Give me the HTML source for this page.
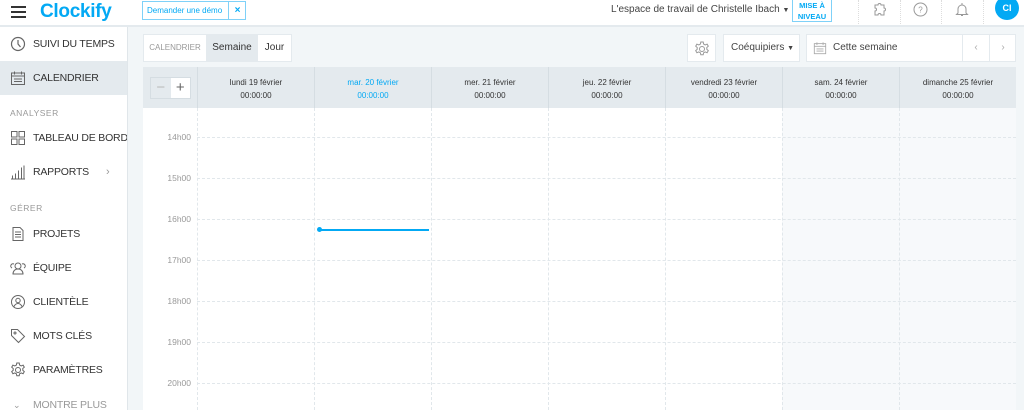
<!DOCTYPE html>
<html><head><meta charset="utf-8"><style>
*{box-sizing:border-box;margin:0;padding:0}
html{width:1024px;height:410px;overflow:hidden}
body{width:1024px;height:410px;overflow:hidden;background:#f2f6f8;font-family:"Liberation Sans",sans-serif;position:relative;color:#333}
.a{position:absolute}
#top{left:0;top:0;width:1024px;height:27px;background:#fff;border-bottom:2px solid #e4eaee;overflow:hidden}
#side{left:0;top:27px;width:128px;height:383px;background:#fff;border-right:1px solid #e0e6ea;overflow:hidden}
.it{position:absolute;left:0;width:127px;height:34px;font-size:10.5px;letter-spacing:-.2px;white-space:nowrap;color:#333;display:flex;align-items:center;padding-left:33px}
.sec{position:absolute;left:10px;font-size:8.5px;color:#999;letter-spacing:.5px}
.ic{position:absolute;left:10px;width:16px;height:16px}
.box{background:#fff;border:1px solid #e4eaee}
.dh{position:absolute;top:0;height:41px;width:117px;border-left:1px solid #d5dde2;text-align:center;font-size:8px;color:#333;padding-top:9px;line-height:13px}
.vl{position:absolute;top:41px;height:302px;border-left:1px dashed #e1e7eb}
.hl{position:absolute;left:54px;width:819px;border-top:1px dashed #e1e7eb}
.tl{position:absolute;left:0;width:48px;text-align:right;font-size:8.5px;color:#999}
</style></head><body>
<div id="top" class="a">
  <div class="a" style="left:11px;top:6px;width:15px;height:2px;background:#333;box-shadow:0 5px 0 #333,0 10px 0 #333"></div>
  <div class="a" style="left:40px;top:1px;font-size:19px;font-weight:bold;color:#03a9f4;letter-spacing:-.3px">Clockify</div>
  <div class="a" style="left:142px;top:1px;height:19px;width:104px;border:1px solid #7fd1f8;font-size:8px;color:#03a9f4;line-height:17px">
    <span style="padding-left:4px">Demander une démo</span>
    <span class="a" style="left:85px;top:0;width:18px;height:17px;border-left:1px solid #7fd1f8;text-align:center;font-weight:bold;font-size:10px">×</span></div>
  <div class="a" style="left:611px;top:4px;font-size:10px;color:#444">L'espace de travail de Christelle Ibach <span style="font-size:7px">▼</span></div>
  <div class="a" style="left:792px;top:-3px;width:40px;height:25px;border:1px solid #7fd1f8;font-size:7.5px;color:#03a9f4;text-align:center;line-height:11px;padding-top:2px;font-weight:bold">MISE À<br>NIVEAU</div>
  <div class="a" style="left:858px;top:0;height:26px;border-left:1px dotted #ddd"></div>
  <div class="a" style="left:900px;top:0;height:26px;border-left:1px dotted #ddd"></div>
  <div class="a" style="left:941px;top:0;height:26px;border-left:1px dotted #ddd"></div>
  <div class="a" style="left:983px;top:0;height:26px;border-left:1px dotted #ddd"></div>
  <svg class="a" style="left:872px;top:3px" width="14" height="14" viewBox="0 0 14 14" fill="none" stroke="#999" stroke-width="1"><path d="M3 2h3a1.5 1.5 0 013 0h3v3a1.5 1.5 0 010 3v4H9a1.5 1.5 0 00-3 0H3V8a1.5 1.5 0 000-3z"/></svg>
  <svg class="a" style="left:913px;top:2px" width="15" height="15" viewBox="0 0 15 15" fill="none" stroke="#999"><circle cx="7.5" cy="7.5" r="6.5"/><text x="7.5" y="10.5" font-size="8" text-anchor="middle" fill="#999" stroke="none" font-family="Liberation Sans">?</text></svg>
  <svg class="a" style="left:955px;top:2px" width="14" height="15" viewBox="0 0 14 15" fill="none" stroke="#999"><path d="M3 11V7a4 4 0 018 0v4l1.5 1.5h-11zM6 13.5h2M7 1v2"/></svg>
  <div class="a" style="left:995px;top:-4px;width:24px;height:24px;border-radius:50%;background:#03a9f4;color:#fff;font-size:9px;font-weight:bold;text-align:center;line-height:24px">CI</div>
</div>
<div id="side" class="a">
  <div class="it" style="top:0"><svg class="ic" viewBox="0 0 16 16" fill="none" stroke="#666" stroke-width="1.2"><circle cx="8" cy="8" r="6.5"/><path d="M8 4v4l2.5 3"/></svg>SUIVI DU TEMPS</div>
  <div class="it" style="top:34px;background:#e4eaee"><svg class="ic" viewBox="0 0 16 16" fill="none" stroke="#666"><rect x="1.5" y="3" width="13" height="11.5"/><path d="M1.5 6h13M4.5 1.5v3M11.5 1.5v3M4 9h8M4 11.5h8"/></svg>CALENDRIER</div>
  <div class="sec" style="top:81px">ANALYSER</div>
  <div class="it" style="top:94px"><svg class="ic" viewBox="0 0 16 16" fill="none" stroke="#666"><rect x="1.5" y="1.5" width="5.5" height="5.5"/><rect x="9" y="1.5" width="5.5" height="5.5"/><rect x="1.5" y="9" width="5.5" height="5.5"/><rect x="9" y="9" width="5.5" height="5.5"/></svg>TABLEAU DE BORD</div>
  <div class="it" style="top:128px"><svg class="ic" viewBox="0 0 16 16" fill="none" stroke="#666"><path d="M1 15h14M2.5 14.5v-3M5.5 14.5v-5M8.5 14.5v-8M11.5 14.5v-11M14 14.5v-13"/></svg>RAPPORTS<span class="a" style="left:106px;color:#999;font-size:11px">›</span></div>
  <div class="sec" style="top:176px">GÉRER</div>
  <div class="it" style="top:190px"><svg class="ic" viewBox="0 0 16 16" fill="none" stroke="#666"><path d="M3 1.5h7l3 3v10H3zM5 6h6M5 8.5h6M5 11h6"/></svg>PROJETS</div>
  <div class="it" style="top:224px"><svg class="ic" viewBox="0 0 16 16" fill="none" stroke="#666"><circle cx="8" cy="6" r="3"/><path d="M3 14c0-3 2-5 5-5s5 2 5 5zM4 4a2 2 0 00-2 4M12 4a2 2 0 012 4"/></svg>ÉQUIPE</div>
  <div class="it" style="top:258px"><svg class="ic" viewBox="0 0 16 16" fill="none" stroke="#666"><circle cx="8" cy="8" r="6.5"/><circle cx="8" cy="6.5" r="2.2"/><path d="M4 12.5c1-2 2.5-3 4-3s3 1 4 3"/></svg>CLIENTÈLE</div>
  <div class="it" style="top:292px"><svg class="ic" viewBox="0 0 16 16" fill="none" stroke="#666"><path d="M1.5 1.5h6l7 7-6 6-7-7z"/><circle cx="5" cy="5" r="1"/></svg>MOTS CLÉS</div>
  <div class="it" style="top:326px"><svg class="ic" viewBox="0 0 16 16" fill="none" stroke="#666"><circle cx="8" cy="8" r="2.5"/><path d="M6.8 1h2.4l.4 2 1.6.9 1.9-.8 1.2 2.1-1.5 1.3v1.8l1.5 1.3-1.2 2.1-1.9-.8-1.6.9-.4 2H6.8l-.4-2-1.6-.9-1.9.8L1.7 9.6l1.5-1.3V6.5L1.7 5.2l1.2-2.1 1.9.8 1.6-.9z"/></svg>PARAMÈTRES</div>
  <div class="it" style="top:361px;color:#999"><span class="a" style="left:13px;font-size:9px;color:#999">⌄</span>MONTRE PLUS</div>
</div>
<div class="a box" style="left:143px;top:34px;width:149px;height:28px;font-size:10px;display:flex">
  <div style="width:62px;text-align:center;line-height:26px;font-size:8px;color:#999">CALENDRIER</div>
  <div style="width:52px;text-align:center;line-height:26px;background:#e4eaee;color:#333">Semaine</div>
  <div style="width:33px;text-align:center;line-height:26px;color:#333">Jour</div>
</div>
<div class="a box" style="left:687px;top:34px;width:29px;height:28px"><svg class="a" style="left:6px;top:6px" width="16" height="16" viewBox="0 0 16 16" fill="none" stroke="#999"><circle cx="8" cy="8" r="2.5"/><path d="M6.8 1h2.4l.4 2 1.6.9 1.9-.8 1.2 2.1-1.5 1.3v1.8l1.5 1.3-1.2 2.1-1.9-.8-1.6.9-.4 2H6.8l-.4-2-1.6-.9-1.9.8L1.7 9.6l1.5-1.3V6.5L1.7 5.2l1.2-2.1 1.9.8 1.6-.9z"/></svg></div>
<div class="a box" style="left:723px;top:34px;width:77px;height:28px;font-size:10px;line-height:26px;padding-left:7px;color:#444">Coéquipiers <span style="font-size:7px">▼</span></div>
<div class="a box" style="left:806px;top:34px;width:210px;height:28px;font-size:10px;line-height:26px;color:#444">
  <svg class="a" style="left:6px;top:6px" width="14" height="14" viewBox="0 0 16 16" fill="none" stroke="#aaa"><rect x="1.5" y="3" width="13" height="11.5"/><path d="M1.5 6h13M4.5 1.5v3M11.5 1.5v3M4 9h8M4 11.5h8"/></svg>
  <span class="a" style="left:26px">Cette semaine</span>
  <div class="a" style="left:155px;top:0;width:27px;height:26px;border-left:1px solid #e4eaee;text-align:center;color:#aaa">‹</div>
  <div class="a" style="left:182px;top:0;width:27px;height:26px;border-left:1px solid #e4eaee;text-align:center;color:#aaa">›</div>
</div>
<div class="a" style="left:143px;top:67px;width:873px;height:343px;background:#fff;overflow:hidden">
  <div class="a" style="left:0;top:0;width:873px;height:41px;background:#e4eaee"></div>
  <div class="a" style="left:7px;top:10px;width:41px;height:22px;border:1px solid #d5dde2;display:flex">
    <div style="width:20px;background:#e4eaee;color:#bbb;text-align:center;font-size:15px;line-height:19px">−</div>
    <div style="width:20px;background:#fff;color:#666;text-align:center;font-size:15px;line-height:19px">+</div>
  </div>
  <div class="a" style="left:639px;top:41px;width:234px;height:302px;background:#f7f9fb"></div>
  <div class="dh" style="left:54px">lundi 19 février<br>00:00:00</div>
  <div class="dh" style="left:171px;color:#03a9f4">mar. 20 février<br>00:00:00</div>
  <div class="dh" style="left:288px">mer. 21 février<br>00:00:00</div>
  <div class="dh" style="left:405px">jeu. 22 février<br>00:00:00</div>
  <div class="dh" style="left:522px">vendredi 23 février<br>00:00:00</div>
  <div class="dh" style="left:639px">sam. 24 février<br>00:00:00</div>
  <div class="dh" style="left:756px">dimanche 25 février<br>00:00:00</div>
  <div class="vl" style="left:54px"></div><div class="vl" style="left:171px"></div><div class="vl" style="left:288px"></div><div class="vl" style="left:405px"></div><div class="vl" style="left:522px"></div><div class="vl" style="left:639px"></div><div class="vl" style="left:756px"></div>
  <div class="hl" style="top:70px"></div><div class="hl" style="top:111px"></div><div class="hl" style="top:152px"></div><div class="hl" style="top:193px"></div><div class="hl" style="top:234px"></div><div class="hl" style="top:275px"></div><div class="hl" style="top:316px"></div>
  <div class="tl" style="top:65px">14h00</div><div class="tl" style="top:106px">15h00</div><div class="tl" style="top:147px">16h00</div><div class="tl" style="top:188px">17h00</div><div class="tl" style="top:229px">18h00</div><div class="tl" style="top:270px">19h00</div><div class="tl" style="top:311px">20h00</div>
  <div class="a" style="left:176px;top:162px;width:110px;height:1.5px;background:#03a9f4"></div>
  <div class="a" style="left:174px;top:160px;width:5px;height:5px;border-radius:50%;background:#03a9f4"></div>
</div>
</body></html>
